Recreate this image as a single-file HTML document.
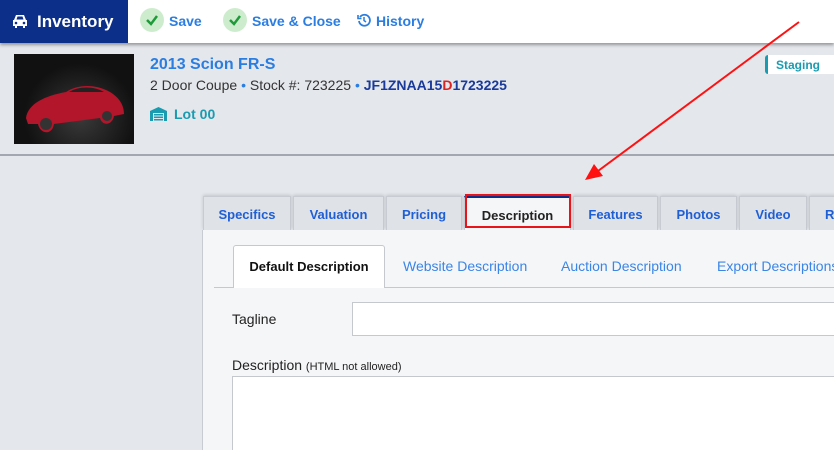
<!DOCTYPE html>
<html style="overflow:hidden;width:834px;height:450px"><head><style>
*{box-sizing:border-box;margin:0;padding:0}
body{width:834px;height:450px;overflow:hidden;background:#e4e7ec;font-family:"Liberation Sans",Arial,sans-serif;position:relative}
.a{position:absolute}
.top{left:0;top:0;width:834px;height:43px;background:#fff;box-shadow:0 2px 3px rgba(0,0,0,.35);z-index:2}
.brand{left:0;top:0;width:128px;height:43px;background:#0c2f8a;color:#fff;font-weight:bold;font-size:17px}
.act{color:#2a7de1;font-size:14px;font-weight:bold;top:13px}
.chk{width:24px;height:24px;border-radius:50%;background:#cdeccd;top:8px}
.tab{top:196px;height:34px;background:#dfe2e7;border:1px solid #c8ccd2;border-bottom:none;color:#1f5fd6;font-size:13px;font-weight:bold;text-align:center;line-height:36px;box-shadow:0 -1px 3px rgba(0,0,0,.15)}
.sub{top:258px;font-size:14px;color:#3a85e6;white-space:nowrap}
</style></head><body>
<div class="a top"></div>
<div class="a brand" style="z-index:3"><svg class="a" style="left:11px;top:13px" width="18" height="16" viewBox="0 0 18 16"><path d="M3 7 L5 2 H13 L15 7 H16 V13 H14 V15 H12 V13 H6 V15 H4 V13 H2 V7Z" fill="#fff"/><circle cx="5" cy="10" r="1.3" fill="#0c2f8a"/><circle cx="13" cy="10" r="1.3" fill="#0c2f8a"/><path d="M5.5 6.5 L6.5 3.5 H11.5 L12.5 6.5Z" fill="#0c2f8a"/></svg><span class="a" style="left:37px;top:12px">Inventory</span></div>
<div class="a chk" style="left:140px;z-index:3"><svg width="24" height="24"><path d="M7 12 L11 16 L17 8" stroke="#1f9a3a" stroke-width="2.5" fill="none"/></svg></div>
<div class="a act" style="left:169px;z-index:3">Save</div>
<div class="a chk" style="left:223px;z-index:3"><svg width="24" height="24"><path d="M7 12 L11 16 L17 8" stroke="#1f9a3a" stroke-width="2.5" fill="none"/></svg></div>
<div class="a act" style="left:252px;z-index:3">Save &amp; Close</div>
<svg class="a" style="left:357px;top:13px;z-index:3" width="14" height="14" viewBox="0 0 14 14"><path d="M3 4 A5.5 5.5 0 1 1 2 8" stroke="#2a7de1" stroke-width="1.8" fill="none"/><path d="M1 2 V5.5 H4.5" stroke="#2a7de1" stroke-width="1.6" fill="none"/><path d="M7 4 V7.5 L9 9" stroke="#2a7de1" stroke-width="1.5" fill="none"/></svg>
<div class="a act" style="left:376px;z-index:3">History</div>

<div class="a" style="left:14px;top:54px;width:120px;height:90px;background:radial-gradient(ellipse at 55% 70%,#3a3a3a 0,#111 60%)"><svg width="120" height="90"><path d="M12 64 C14 50 30 42 52 38 C64 30 82 30 96 38 C106 44 110 52 110 60 L100 62 C98 72 88 72 86 64 L40 70 C38 82 26 80 24 70 L14 70Z" fill="#b3152a"/><path d="M55 38 C65 32 80 32 90 38Z" fill="#222"/><circle cx="32" cy="70" r="6" fill="#333"/><circle cx="93" cy="62" r="5" fill="#333"/></svg></div>
<div class="a" style="left:150px;top:56px;font-size:16px;font-weight:bold;color:#2a7de1">2013 Scion FR-S</div>
<div class="a" style="left:150px;top:77px;font-size:14px;color:#333;white-space:nowrap">2 Door Coupe <span style="color:#2a7de1">•</span> Stock #: 723225 <span style="color:#2a7de1">•</span> <b style="color:#1a3a9a">JF1ZNAA15<span style="color:#d22">D</span>1723225</b></div>
<svg class="a" style="left:150px;top:107px" width="17" height="14" viewBox="0 0 17 14"><path d="M0 4 L8.5 0 L17 4 V14 H14 V6 H3 V14 H0Z" fill="#1a9bb0"/><rect x="4" y="7" width="9" height="1.5" fill="#1a9bb0"/><rect x="4" y="9.5" width="9" height="1.5" fill="#1a9bb0"/><rect x="4" y="12" width="9" height="1.5" fill="#1a9bb0"/></svg>
<div class="a" style="left:174px;top:106px;font-size:14px;font-weight:bold;color:#1a9bb0">Lot 00</div>
<div class="a" style="left:765px;top:55px;width:80px;height:19px;background:#fff;border-left:3px solid #1a9bb0;border-radius:3px;font-size:12px;font-weight:bold;color:#1a9bb0;padding:3px 0 0 8px">Staging</div>
<div class="a" style="left:0;top:154px;width:834px;height:2px;background:#a3a8b0"></div>

<div class="a tab" style="left:203px;width:88px">Specifics</div>
<div class="a tab" style="left:293px;width:91px">Valuation</div>
<div class="a tab" style="left:386px;width:76px">Pricing</div>
<div class="a tab" style="left:464px;width:107px;background:#f5f6f8;color:#222;border-top:2px solid #0c2f8a">Description</div>
<div class="a tab" style="left:573px;width:85px">Features</div>
<div class="a tab" style="left:660px;width:77px">Photos</div>
<div class="a tab" style="left:739px;width:68px">Video</div>
<div class="a tab" style="left:809px;width:40px;text-align:left;padding-left:15px">R</div>
<div class="a" style="left:465px;top:194px;width:106px;height:34px;border:2px solid #e8141b"></div>

<div class="a" style="left:202px;top:230px;width:640px;height:220px;background:#f5f6f8;border-left:1px solid #c8ccd2"></div>
<div class="a" style="left:214px;top:287px;width:630px;height:1px;background:#c5c8ce"></div>
<div class="a" style="left:233px;top:245px;width:152px;height:43px;background:#fff;border:1px solid #c5c8ce;border-bottom:none;border-radius:3px 3px 0 0;font-size:13px;font-weight:bold;color:#111;text-align:center;line-height:42px">Default Description</div>
<div class="a sub" style="left:403px">Website Description</div>
<div class="a sub" style="left:561px">Auction Description</div>
<div class="a sub" style="left:717px">Export Descriptions</div>

<div class="a" style="left:232px;top:311px;font-size:14px;color:#222">Tagline</div>
<div class="a" style="left:352px;top:302px;width:500px;height:34px;background:#fff;border:1px solid #c5c8ce"></div>
<div class="a" style="left:232px;top:357px;font-size:14px;color:#222">Description <span style="font-size:11px">(HTML not allowed)</span></div>
<div class="a" style="left:232px;top:376px;width:620px;height:74px;background:#fff;border:1px solid #c5c8ce;border-bottom:none"></div>

<svg class="a" style="left:0;top:0;z-index:5" width="834" height="450"><line x1="799" y1="22" x2="598" y2="171" stroke="#f11" stroke-width="2"/><path d="M585 180 L594 164 L603 176Z" fill="#f11"/></svg>
</body></html>
